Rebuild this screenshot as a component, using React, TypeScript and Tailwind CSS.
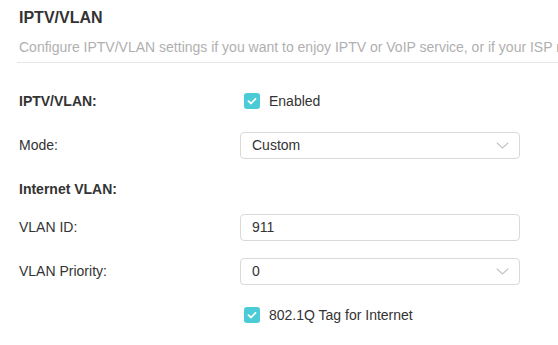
import React from 'react';

const Check = () => (
  <span className="w-4 h-4 rounded-[3px] bg-[#4acbd6] flex items-center justify-center shrink-0">
    <svg width="10" height="8" viewBox="0 0 10 8" fill="none">
      <path d="M1.5 4.2 L4 6.5 L8.5 1.8" stroke="#fff" strokeWidth="1.8" strokeLinecap="round" strokeLinejoin="round" />
    </svg>
  </span>
);

const Chevron = () => (
  <svg width="13" height="7" viewBox="0 0 13 7" fill="none">
    <path d="M0.8 0.8 L6.5 6 L12.2 0.8" stroke="#c4c4c4" strokeWidth="1.2" />
  </svg>
);

function Select({ value }: { value: string }) {
  return (
    <div className="w-[280px] h-[27px] border border-[#d9d9d9] rounded-[4px] flex items-center justify-between pl-[11px] pr-[10px] text-[14px] text-[#333]">
      <span>{value}</span>
      <Chevron />
    </div>
  );
}

export default function App() {
  const label = 'text-[14px] text-[#333]';
  return (
    <div className="w-[558px] h-[345px] overflow-hidden bg-white font-['Liberation_Sans',Arial,sans-serif]">
      <div className="pl-[17px] pt-[6px]">
        <h2 className="pl-[2px] text-[16px] leading-[24px] font-bold text-[#333]">IPTV/VLAN</h2>
        <p className="pl-[2px] mt-[7px] text-[14px] leading-[20px] text-[#b0b0b0] whitespace-nowrap">
          Configure IPTV/VLAN settings if you want to enjoy IPTV or VoIP service, or if your ISP requires a VLAN tag.
        </p>
        <div className="mt-[5px] h-px w-[800px] bg-[#e6e6e6]" />
      </div>

      <div className="pl-[19px] pt-[16px] grid grid-cols-[221px_280px]">
        <div className={`h-[44px] flex items-center font-bold ${label}`}>IPTV/VLAN:</div>
        <div className="h-[44px] flex items-center pl-[4px] gap-[9px]">
          <Check />
          <span className={label}>Enabled</span>
        </div>

        <div className={`h-[44px] flex items-center ${label}`}>Mode:</div>
        <div className="h-[44px] flex items-center">
          <Select value="Custom" />
        </div>

        <div className={`h-[38px] pt-[6px] flex items-center font-bold ${label}`}>Internet VLAN:</div>
        <div className="h-[38px]" />

        <div className={`h-[44px] flex items-center ${label}`}>VLAN ID:</div>
        <div className="h-[44px] flex items-center">
          <div className="w-[280px] h-[27px] border border-[#d9d9d9] rounded-[4px] flex items-center pl-[11px] text-[14px] text-[#333]">911</div>
        </div>

        <div className={`h-[44px] flex items-center ${label}`}>VLAN Priority:</div>
        <div className="h-[44px] flex items-center">
          <Select value="0" />
        </div>

        <div className="h-[44px]" />
        <div className="h-[44px] flex items-center pl-[4px] gap-[9px]">
          <Check />
          <span className={label}>802.1Q Tag for Internet</span>
        </div>
      </div>
    </div>
  );
}
